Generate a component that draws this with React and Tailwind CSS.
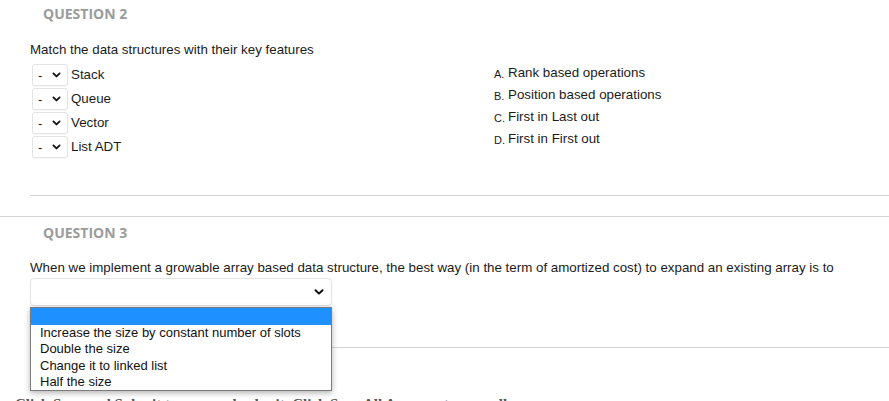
import React from 'react';

const matches = [
  { label: 'Stack' },
  { label: 'Queue' },
  { label: 'Vector' },
  { label: 'List ADT' },
];

const answers = [
  ['A.', 'Rank based operations'],
  ['B.', 'Position based operations'],
  ['C.', 'First in Last out'],
  ['D.', 'First in First out'],
];

const options = [
  'Increase the size by constant number of slots',
  'Double the size',
  'Change it to linked list',
  'Half the size',
];

function Chevron({ className }) {
  return (
    <svg viewBox="0 0 10 6" className={className} fill="none" stroke="#111" strokeWidth="2" strokeLinecap="round" strokeLinejoin="round">
      <path d="M1.5 1.2 5 4.6 8.5 1.2" />
    </svg>
  );
}

function SmallSelect() {
  return (
    <div className="flex h-[22px] w-[36px] items-center justify-between rounded-[3px] border border-[#e3e3e3] bg-white pl-[5px] pr-[6px] shadow-[0_1px_1px_rgba(0,0,0,0.04)]">
      <span className="text-[13px] leading-none">-</span>
      <Chevron className="h-[6px] w-[9px]" />
    </div>
  );
}

function Heading({ children }) {
  return (
    <h3 className="ml-[43px] text-[14px] font-bold leading-[20px] text-[#9b9b9b] [font-family:'Open_Sans',sans-serif]">
      {children}
    </h3>
  );
}

export default function App() {
  return (
    <div className="h-[401px] w-[889px] overflow-hidden bg-white text-[13.33px] text-[#1b1b1b] [font-family:'Liberation_Sans',Arial,sans-serif]">
      {/* Question 2 */}
      <div className="pt-[4px]">
        <Heading>QUESTION 2</Heading>
        <p className="ml-[30px] mt-[18px] leading-[16px]">Match the data structures with their key features</p>
        <div className="mt-[6px] flex">
          <div className="ml-[32px] flex w-[462px] flex-col gap-[2px]">
            {matches.map((m) => (
              <div key={m.label} className="flex items-center gap-[3px]">
                <SmallSelect />
                <span className="leading-[22px]">{m.label}</span>
              </div>
            ))}
          </div>
          <div className="-mt-[2px] flex flex-col">
            {answers.map(([k, v]) => (
              <div key={k} className="flex h-[22px] items-center">
                <span className="w-[14px] pt-[3px] text-[11px] leading-none">{k}</span>
                <span className="leading-[16px]">{v}</span>
              </div>
            ))}
          </div>
        </div>
        <div className="ml-[30px] mt-[37px] border-t border-[#d4d4d4]" />
      </div>

      <div className="mt-[20px] border-t border-[#d4d4d4]" />

      {/* Question 3 */}
      <div className="pt-[6px]">
        <Heading>QUESTION 3</Heading>
        <p className="ml-[30px] mt-[17px] leading-[16px]">
          When we implement a growable array based data structure, the best way (in the term of amortized cost) to expand an existing array is to
        </p>
        <div className="relative ml-[30px] mt-[2px] w-[302px]">
          <div className="flex h-[28px] items-center justify-end rounded-[4px] border border-[#e3e3e3] bg-white pr-[7px] shadow-[0_1px_2px_rgba(0,0,0,0.06)]">
            <Chevron className="h-[6px] w-[10px]" />
          </div>
          <div className="absolute left-0 top-[29px] z-10 w-[302px] border border-[#7b7b7b] bg-white shadow-[0_2px_6px_rgba(0,0,0,0.3)]">
            <div className="h-[17px] bg-[#1e90ff]" />
            {options.map((o) => (
              <div key={o} className="pl-[9px] text-[13px] leading-[16.25px] text-[#111]">
                {o}
              </div>
            ))}
          </div>
        </div>
        <div className="ml-[30px] mt-[41px] border-t border-[#d4d4d4]" />
        <p className="ml-[15px] mt-[48px] text-[15px] font-bold leading-[16px] text-[#555] [font-family:'Liberation_Serif',serif]">
          Click Save and Submit to save and submit. Click Save All Answers to save all answers.
        </p>
      </div>
    </div>
  );
}
